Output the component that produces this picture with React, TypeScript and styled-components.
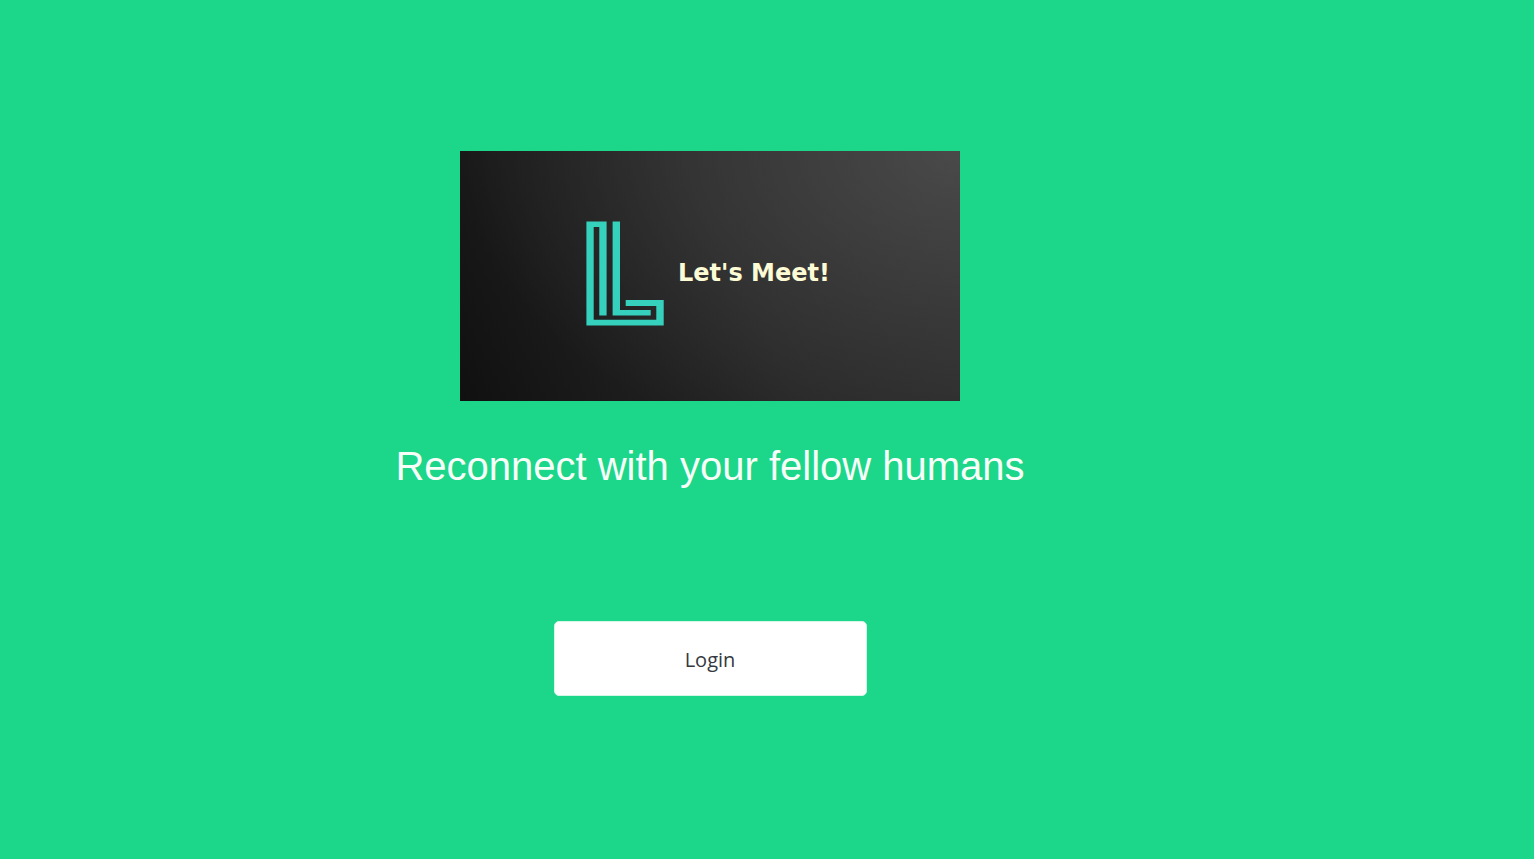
import React from "react";
import styled, { createGlobalStyle } from "styled-components";

const GlobalStyle = createGlobalStyle`
  *, *::before, *::after { box-sizing: border-box; }
  body {
    margin: 0;
    background: #1cd68a;
    font-family: "Liberation Sans", Arial, sans-serif;
  }
`;

const Page = styled.main`
  display: flex;
  flex-direction: column;
  align-items: center;
  min-height: 100vh;
  padding: 151px 114px 40px 0;
`;

const Banner = styled.div`
  display: flex;
  align-items: flex-start;
  gap: 14px;
  width: 500px;
  max-width: 100%;
  height: 250px;
  padding: 70px 0 0 126px;
  background:
    radial-gradient(ellipse 100% 130% at 100% 0%, rgba(255, 255, 255, 0.14), rgba(255, 255, 255, 0) 100%),
    linear-gradient(64deg, #101010 0%, #1c1c1c 26%, #262626 55%, #2c2c2c 100%);
`;

const Monogram = styled.svg`
  flex: none;
  width: 78px;
  height: 105px;
  fill: #36d1bc;
`;

const BrandName = styled.span`
  padding-top: 38px;
  color: #fdfbd6;
  font: 700 24px/28px "DejaVu Sans", Verdana, sans-serif;
  white-space: nowrap;
`;

const Tagline = styled.h1`
  margin: 41px 0 0;
  color: #f8fff9;
  font-size: 40px;
  font-weight: 400;
  line-height: 48px;
  text-align: center;
`;

const LoginButton = styled.button`
  width: 313px;
  max-width: 100%;
  height: 75px;
  margin-top: 131px;
  padding: 2px 0 0;
  border: 1px solid #d5f7e8;
  border-radius: 5px;
  background: #fff;
  color: #343a40;
  font: 400 20px/30px "Segoe UI", "Open Sans", sans-serif;
  cursor: pointer;
`;

export default function App() {
  return (
    <>
      <GlobalStyle />
      <Page>
        <Banner>
          <Monogram viewBox="0 0 78 105" aria-hidden="true">
            <path d="M.4 .4H20.6V94.4H13.3V6H7.7V98.7H70.3V85H39.7V79H77.7V104.4H.4Z" />
            <path d="M26.6 .4H34V89H64.7V94.4H26.6Z" />
          </Monogram>
          <BrandName>Let's Meet!</BrandName>
        </Banner>
        <Tagline>Reconnect with your fellow humans</Tagline>
        <LoginButton type="button">Login</LoginButton>
      </Page>
    </>
  );
}
